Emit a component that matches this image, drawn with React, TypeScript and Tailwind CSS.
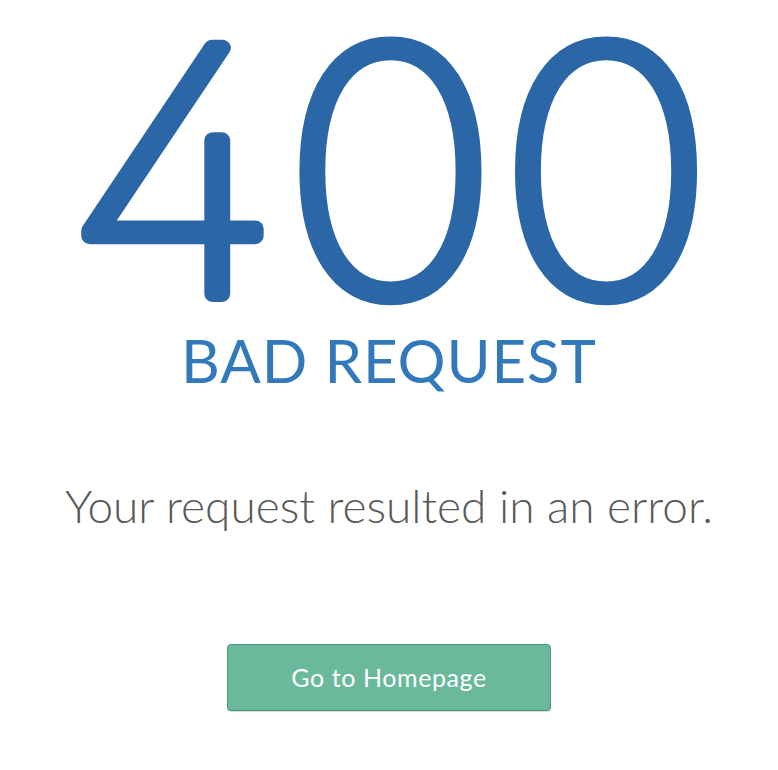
export default function App() {
  return (
    <div className="flex min-h-[770px] flex-col items-center bg-white font-['Lato',sans-serif]">
      {/* big status code, drawn as stroked text so the ends come out rounded */}
      <svg
        width="778"
        height="316"
        viewBox="0 0 778 316"
        className="block overflow-visible"
        aria-label="400"
      >
        <text
          x="57 256 452"
          y="291"
          transform="scale(1.1 1.01)"
          fontSize={335}
          fill="#2b67a7"
          stroke="#2b67a7"
          strokeWidth={16}
          strokeLinejoin="round"
          strokeLinecap="round"
          className="font-['Inter',sans-serif] font-thin [font-feature-settings:'ss01']"
        >
          400
        </text>
      </svg>
      <h1 className="mt-[9px] text-[60px] leading-[70px] font-normal tracking-[0.9px] text-[#3279bb]">
        BAD REQUEST
      </h1>
      <p className="mt-[83px] text-[46px] leading-[56px] font-light text-[#595959]">
        Your request resulted in an error.
      </p>
      <button
        type="button"
        className="mt-[110px] h-[67px] w-[324px] rounded-[4px] border border-[#4e967b] bg-[#69b99a] text-[25px] tracking-[0.6px] text-white shadow-[0_1px_1px_rgba(0,0,0,0.15)]"
      >
        Go to Homepage
      </button>
    </div>
  );
}
